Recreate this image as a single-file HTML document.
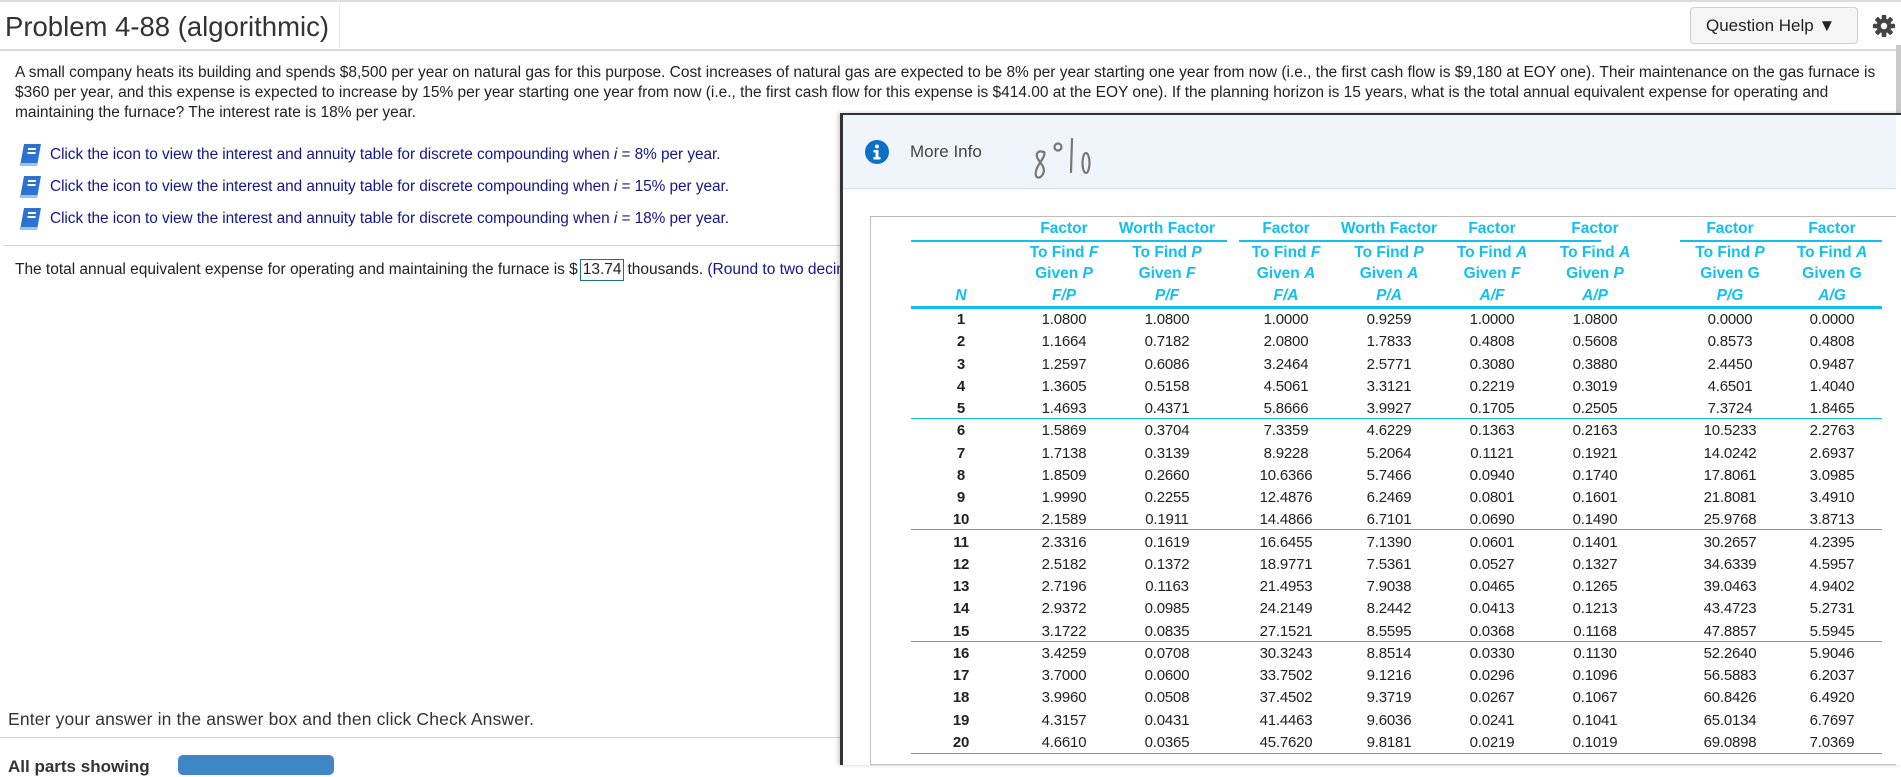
<!DOCTYPE html>
<html><head><meta charset="utf-8"><style>
*{margin:0;padding:0;box-sizing:border-box}
body{width:1901px;height:765px;overflow:hidden;background:#fff;font-family:"Liberation Sans",Arial,sans-serif;position:relative;color:#222}
.a{position:absolute;white-space:nowrap}
.p{font-size:15.5px;letter-spacing:-0.02px;color:#222;left:15px}
.lk{font-size:15.4px;letter-spacing:-0.05px;color:#15158f;left:50px}
.ic{position:absolute;left:18px;width:25px;height:25px}
.h{color:#10c0ee;font-size:15.5px;font-weight:bold;text-align:center;width:130px;margin-left:-65px}
.d{font-size:15px;text-align:center;width:100px;margin-left:-50px;color:#222;letter-spacing:-0.2px}
.n{font-weight:bold}
.cl{position:absolute;height:2px;background:#10c0ee}
</style></head><body>
<div class="a" style="left:0;top:0;width:1901px;height:2px;background:#d8dbe4"></div>
<div class="a" style="left:5px;top:11px;font-size:27.5px;color:#333;letter-spacing:0px">Problem 4-88 (algorithmic)</div>
<div class="a" style="left:339px;top:4px;width:1px;height:44px;background:#e2e5ea"></div>
<div class="a" style="left:0;top:49px;width:1901px;height:2px;background:#d4d8e2"></div>
<div class="a" style="left:1690px;top:7px;width:168px;height:37px;border:1px solid #d0d0d0;border-radius:4px;background:#f5f5f5;font-size:17px;color:#222;padding:8px 0 0 15px">Question Help <span style="font-size:17px">&#9660;</span></div>
<svg class="a" style="left:1873px;top:15px" width="22" height="22" viewBox="0 0 24 24"><g fill="#444"><circle cx="12" cy="12" r="8"/><rect x="9.5" y="0" width="5" height="24" rx="1"/><rect x="9.5" y="0" width="5" height="24" rx="1" transform="rotate(45 12 12)"/><rect x="9.5" y="0" width="5" height="24" rx="1" transform="rotate(90 12 12)"/><rect x="9.5" y="0" width="5" height="24" rx="1" transform="rotate(135 12 12)"/></g><circle cx="12" cy="12" r="3.5" fill="#fff"/></svg>
<div class="a" style="left:1896px;top:45px;width:5px;height:720px;background:#c8c8c8"></div>

<div class="a p" style="top:64px">A small company heats its building and spends $8,500 per year on natural gas for this purpose. Cost increases of natural gas are expected to be 8% per year starting one year from now (i.e., the first cash flow is $9,180 at EOY one). Their maintenance on the gas furnace is</div>
<div class="a p" style="top:84px">$360 per year, and this expense is expected to increase by 15% per year starting one year from now (i.e., the first cash flow for this expense is $414.00 at the EOY one). If the planning horizon is 15 years, what is the total annual equivalent expense for operating and</div>
<div class="a p" style="top:104px">maintaining the furnace? The interest rate is 18% per year.</div>

<svg class="ic" style="top:143px" viewBox="0 0 25 25"><path fill="#2a74d0" d="M6 1h17l-4 22H2z"/><path fill="#9fc3ef" d="M2 23h17l1-3H3z"/><rect x="10" y="5" width="8" height="2" fill="#fff"/><rect x="9.5" y="9" width="8" height="2" fill="#fff"/></svg>
<div class="a lk" style="top:146px">Click the icon to view the interest and annuity table for discrete compounding when <i>i</i> = 8% per year.</div>
<svg class="ic" style="top:175px" viewBox="0 0 25 25"><path fill="#2a74d0" d="M6 1h17l-4 22H2z"/><path fill="#9fc3ef" d="M2 23h17l1-3H3z"/><rect x="10" y="5" width="8" height="2" fill="#fff"/><rect x="9.5" y="9" width="8" height="2" fill="#fff"/></svg>
<div class="a lk" style="top:178px">Click the icon to view the interest and annuity table for discrete compounding when <i>i</i> = 15% per year.</div>
<svg class="ic" style="top:207px" viewBox="0 0 25 25"><path fill="#2a74d0" d="M6 1h17l-4 22H2z"/><path fill="#9fc3ef" d="M2 23h17l1-3H3z"/><rect x="10" y="5" width="8" height="2" fill="#fff"/><rect x="9.5" y="9" width="8" height="2" fill="#fff"/></svg>
<div class="a lk" style="top:210px">Click the icon to view the interest and annuity table for discrete compounding when <i>i</i> = 18% per year.</div>

<div class="a" style="left:4px;top:245px;width:840px;height:1px;background:#cfd3dc"></div>
<div class="a p" style="top:259px">The total annual equivalent expense for operating and maintaining the furnace is $<span style="display:inline-block;border:1px solid #1a6f9f;padding:1px 2px;margin:0 3px 0 2px">13.74</span>thousands. <span style="color:#15158f">(Round to two decimal places.)</span></div>

<div class="a" style="left:8px;top:709px;font-size:17.5px;color:#333;letter-spacing:0.15px">Enter your answer in the answer box and then click Check Answer.</div>
<div class="a" style="left:0;top:737px;width:840px;height:1px;background:#cfd3dc"></div>
<div class="a" style="left:8px;top:757px;font-size:17px;font-weight:bold;color:#333">All parts showing</div>
<div class="a" style="left:178px;top:755px;width:156px;height:20px;background:#3f86c6;border-radius:5px"></div>

<div class="a" style="left:840px;top:113px;width:1061px;height:652px;background:#fff;border-left:3px solid #333;border-top:2px solid #333;box-shadow:-2px 0 4px rgba(0,0,0,.2)"></div>
<div class="a" style="left:843px;top:115px;width:1053px;height:74px;background:#f0f5fb;border-bottom:1px solid #cfdff0"></div>
<svg class="a" style="left:865px;top:140px" width="24" height="24" viewBox="0 0 24 24"><circle cx="12" cy="12" r="12" fill="#0b6fc7"/><circle cx="12" cy="6.5" r="2" fill="#fff"/><path fill="#fff" d="M8.5 10h5v7h2v2.5h-7V17h2v-4.5h-2z"/></svg>
<div class="a" style="left:910px;top:142px;font-size:17px;color:#444">More Info</div>
<svg class="a" style="left:1030px;top:136px" width="70" height="54" viewBox="0 0 70 54"><g fill="none" stroke="#777" stroke-width="2.2" stroke-linecap="round"><path d="M13 16c-5-2-8 2-5 7s8 9 5 15-9 4-7-3 5-9 7-13 2-7-0-6"/><circle cx="28" cy="11" r="3.5"/><path d="M42 3l-1 33"/><ellipse cx="56" cy="27" rx="3.5" ry="10"/></g></svg>

<div class="a" style="left:870px;top:216px;width:1026px;height:549px;border:1px solid #bdbdbd;border-right:none"></div>

<div class="cl" style="left:911px;top:240px;width:316px"></div>
<div class="cl" style="left:1239px;top:240px;width:362px"></div>
<div class="cl" style="left:1680px;top:240px;width:202px"></div>
<div class="cl" style="left:911px;top:306px;width:971px;height:3px"></div>
<div class="cl" style="left:911px;top:418px;width:971px;height:1px"></div>
<div class="cl" style="left:911px;top:529px;width:971px;height:1px"></div>
<div class="cl" style="left:911px;top:641px;width:971px;height:1px"></div>
<div class="cl" style="left:911px;top:753px;width:971px;height:1px"></div>

<div id="tb"></div>
<script>
var cx=[961,1064,1167,1286,1389,1492,1595,1730,1832];
var H=[["","Factor","Worth Factor","Factor","Worth Factor","Factor","Factor","Factor","Factor"],
["","To Find <i>F</i>","To Find <i>P</i>","To Find <i>F</i>","To Find <i>P</i>","To Find <i>A</i>","To Find <i>A</i>","To Find <i>P</i>","To Find <i>A</i>"],
["","Given <i>P</i>","Given <i>F</i>","Given <i>A</i>","Given <i>A</i>","Given <i>F</i>","Given <i>P</i>","Given G","Given G"],
["<i>N</i>","<i>F/P</i>","<i>P/F</i>","<i>F/A</i>","<i>P/A</i>","<i>A/F</i>","<i>A/P</i>","<i>P/G</i>","<i>A/G</i>"]];
var HY=[220,244,265,287];
var D=`1.0800 1.0800 1.0000 0.9259 1.0000 1.0800 0.0000 0.0000
1.1664 0.7182 2.0800 1.7833 0.4808 0.5608 0.8573 0.4808
1.2597 0.6086 3.2464 2.5771 0.3080 0.3880 2.4450 0.9487
1.3605 0.5158 4.5061 3.3121 0.2219 0.3019 4.6501 1.4040
1.4693 0.4371 5.8666 3.9927 0.1705 0.2505 7.3724 1.8465
1.5869 0.3704 7.3359 4.6229 0.1363 0.2163 10.5233 2.2763
1.7138 0.3139 8.9228 5.2064 0.1121 0.1921 14.0242 2.6937
1.8509 0.2660 10.6366 5.7466 0.0940 0.1740 17.8061 3.0985
1.9990 0.2255 12.4876 6.2469 0.0801 0.1601 21.8081 3.4910
2.1589 0.1911 14.4866 6.7101 0.0690 0.1490 25.9768 3.8713
2.3316 0.1619 16.6455 7.1390 0.0601 0.1401 30.2657 4.2395
2.5182 0.1372 18.9771 7.5361 0.0527 0.1327 34.6339 4.5957
2.7196 0.1163 21.4953 7.9038 0.0465 0.1265 39.0463 4.9402
2.9372 0.0985 24.2149 8.2442 0.0413 0.1213 43.4723 5.2731
3.1722 0.0835 27.1521 8.5595 0.0368 0.1168 47.8857 5.5945
3.4259 0.0708 30.3243 8.8514 0.0330 0.1130 52.2640 5.9046
3.7000 0.0600 33.7502 9.1216 0.0296 0.1096 56.5883 6.2037
3.9960 0.0508 37.4502 9.3719 0.0267 0.1067 60.8426 6.4920
4.3157 0.0431 41.4463 9.6036 0.0241 0.1041 65.0134 6.7697
4.6610 0.0365 45.7620 9.8181 0.0219 0.1019 69.0898 7.0369`.split("\n");
var s="";
for(var r=0;r<4;r++)for(var c=0;c<9;c++)if(H[r][c])s+='<div class="a h" style="left:'+cx[c]+'px;top:'+HY[r]+'px">'+H[r][c]+'</div>';
for(var i=0;i<20;i++){var v=[(i+1)+""].concat(D[i].split(" "));var y=311+i*22.25;
for(var c=0;c<9;c++)s+='<div class="a d'+(c==0?' n':'')+'" style="left:'+cx[c]+'px;top:'+y+'px">'+v[c]+'</div>';}
document.getElementById("tb").innerHTML=s;
</script>
</body></html>
